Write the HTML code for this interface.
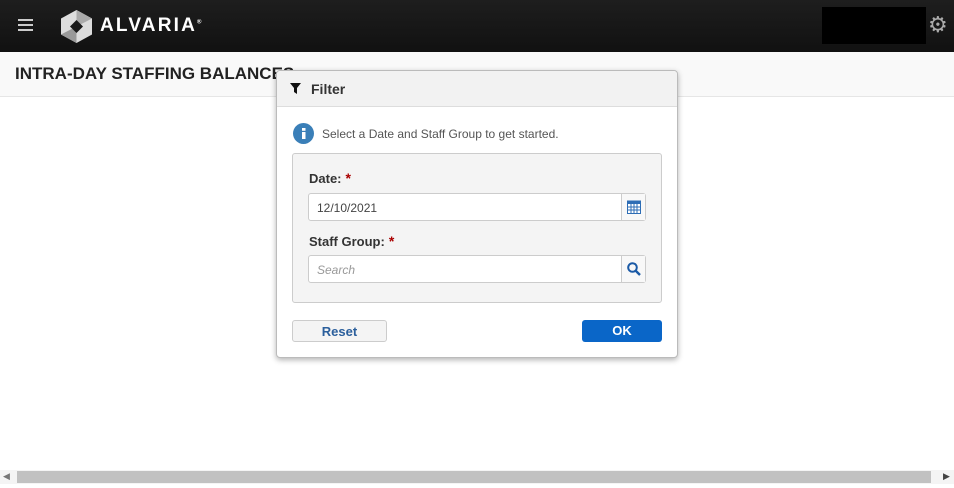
<!DOCTYPE html>
<html><head><style>
*{box-sizing:border-box;margin:0;padding:0}
body{width:954px;height:488px;overflow:hidden;background:#fff;font-family:"Liberation Sans",Arial,sans-serif;position:relative}
.top{position:absolute;left:0;top:0;width:954px;height:52px;background:linear-gradient(#1e1e1e,#111)}
.sub{position:absolute;left:0;top:52px;width:954px;height:45px;background:#f9f9f9;border-bottom:1px solid #e6e6e6}
.title{position:absolute;left:15px;top:64px;font-size:17px;font-weight:bold;color:#222}
.dlg{position:absolute;left:276px;top:70px;width:402px;height:288px;background:#fff;border:1px solid #bbb;border-radius:4px;box-shadow:0 2px 6px rgba(0,0,0,.3)}
.hd{height:36px;background:#f2f2f2;border-bottom:1px solid #ddd;border-radius:4px 4px 0 0;position:relative}
.hd span{position:absolute;left:34px;top:10px;font-size:14px;font-weight:bold;color:#333}
.info{position:absolute;left:45px;top:56px;font-size:12px;color:#555}
.box{position:absolute;left:15px;top:82px;width:370px;height:150px;background:#f4f4f4;border:1px solid #ccc;border-radius:3px}
.lbl{position:absolute;left:16px;font-size:13px;font-weight:bold;color:#333}
.lbl b{color:#a00;margin-left:4px;font-size:14px}
.inp{position:absolute;left:15px;width:338px;height:28px;background:#fff;border:1px solid #ccc;border-radius:3px;font-size:12px;color:#444;padding:7px 8px}
.ib{position:absolute;right:0;top:0;width:24px;height:26px;border-left:1px solid #ccc;background:#f8f8f8}
.btn{position:absolute;top:249px;height:22px;border-radius:3px;font-size:13px;font-weight:bold;text-align:center;line-height:21px}
</style></head><body>
<div class="top">
 <div style="position:absolute;left:18px;top:19px;width:15px;height:2px;background:#ccc;box-shadow:0 5px 0 #ccc,0 10px 0 #ccc"></div>
 <svg style="position:absolute;left:61px;top:10px" width="31" height="33" viewBox="0 0 31 33"><polygon points="15.5,0 31,8.5 31,24.5 15.5,33 0,24.5 0,8.5" fill="#ddd"/><polygon points="15.5,0 31,8.5 15.5,16.5" fill="#aaa"/><polygon points="0,24.5 15.5,33 15.5,16.5" fill="#999"/><polygon points="15.5,10 22,16.5 15.5,23 9,16.5" fill="#1a1a1a"/></svg>
 <div style="position:absolute;left:100px;top:15px;font-size:19px;font-weight:bold;color:#fff;letter-spacing:2.2px">ALVARIA<sup style="font-size:6px;letter-spacing:0">®</sup></div>
 <div style="position:absolute;left:822px;top:7px;width:104px;height:37px;background:#000"></div>
 <div style="position:absolute;left:928px;top:13px;font-size:22px;color:#aaa;line-height:24px">⚙</div>
</div>
<div class="sub"></div>
<div class="title">INTRA-DAY STAFFING BALANCES</div>
<div class="dlg">
 <div class="hd"><svg style="position:absolute;left:13px;top:12px" width="11" height="11" viewBox="0 0 11 11"><polygon points="0,0 11,0 7,5 7,11 4,9 4,5" fill="#111"/></svg><span>Filter</span></div>
 <svg style="position:absolute;left:16px;top:52px" width="21" height="21"><circle cx="10.5" cy="10.5" r="10.5" fill="#3a7fb8"/><rect x="9" y="9" width="3.5" height="7" fill="#fff"/><rect x="9" y="5" width="3.5" height="2.8" fill="#fff"/></svg>
 <div class="info">Select a Date and Staff Group to get started.</div>
 <div class="box">
  <div class="lbl" style="top:16px">Date:<b>*</b></div>
  <div class="inp" style="top:39px">12/10/2021<div class="ib"><svg style="position:absolute;left:5px;top:5px" width="14" height="15" viewBox="0 0 14 15"><rect x="0.5" y="2" width="13" height="12.5" fill="#fff" stroke="#2d6db5"/><rect x="0.5" y="2" width="13" height="3" fill="#2d6db5"/><path d="M1 8h12M1 11h12M4 5v10M7 5v10M10 5v10" stroke="#2d6db5" stroke-width="1"/></svg></div></div>
  <div class="lbl" style="top:79px">Staff Group:<b>*</b></div>
  <div class="inp" style="top:101px;color:#999;font-style:italic">Search<div class="ib"><svg style="position:absolute;left:5px;top:6px" width="14" height="14" viewBox="0 0 14 14"><circle cx="5.5" cy="5.5" r="4.3" fill="none" stroke="#1b5aa6" stroke-width="2"/><path d="M8.7 8.7L13 13" stroke="#1b5aa6" stroke-width="2.4"/></svg></div></div>
 </div>
 <div class="btn" style="left:15px;width:95px;background:#f4f4f4;border:1px solid #ccc;color:#2b5f9c">Reset</div>
 <div class="btn" style="left:305px;width:80px;background:#0a66c8;color:#fff">OK</div>
</div>
<div style="position:absolute;left:0;top:470px;width:954px;height:14px;background:#f4f4f4"></div>
<div style="position:absolute;left:17px;top:471px;width:914px;height:12px;background:#c1c1c1"></div>
<div style="position:absolute;left:3px;top:471px;font-size:9px;color:#777">◀</div>
<div style="position:absolute;left:943px;top:471px;font-size:9px;color:#444">▶</div>
</body></html>
